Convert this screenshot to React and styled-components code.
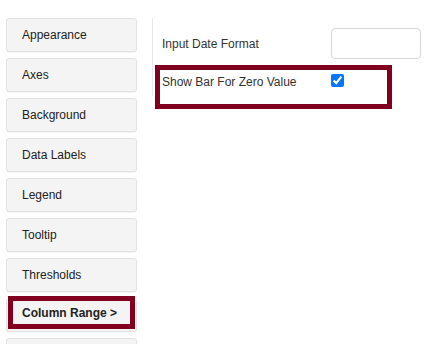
import React from "react";
import styled, { createGlobalStyle } from "styled-components";

const Global = createGlobalStyle`
  body {
    margin: 0;
    background: #ffffff;
    font-family: "Liberation Sans", Arial, sans-serif;
  }
`;

const Page = styled.div`
  display: flex;
  align-items: flex-start;
  width: 432px;
  height: 344px;
  overflow: hidden;
`;

const Sidebar = styled.div`
  display: flex;
  flex-direction: column;
  gap: 6px;
  width: 152px;
  padding: 18px 0 0 6px;
  box-sizing: border-box;
  flex-shrink: 0;
`;

const TabButton = styled.div`
  display: flex;
  align-items: stretch;
  box-sizing: border-box;
  width: 131px;
  height: 34px;
  flex-shrink: 0;
  background: #f4f4f4;
  border: 1px solid #e2e2e2;
  border-radius: 3px;
  box-shadow: 0 1px 1px rgba(0, 0, 0, 0.04);
  color: #222;
  font-size: 12px;
  line-height: 14px;
  cursor: pointer;
`;

const TabLabel = styled.span`
  display: flex;
  align-items: center;
  padding-left: 15px;
`;

const ActiveLabel = styled.span`
  display: flex;
  align-items: center;
  flex: 1;
  margin: -3px 1px 2px 1px;
  padding-left: 9px;
  border: 5px solid #800020;
  font-weight: bold;
`;

const Panel = styled.div`
  width: 270px;
  height: 78px;
  margin-top: 18px;
  border-left: 1px solid #e8e8e8;
  display: flex;
  flex-direction: column;
  gap: 6px;
  padding-top: 10px;
  box-sizing: border-box;
`;

const Row = styled.div`
  display: flex;
  align-items: center;
  flex-shrink: 0;
  padding-left: 9px;
  height: 31px;
`;

const HighlightRow = styled.div`
  display: flex;
  align-items: flex-start;
  flex-shrink: 0;
  box-sizing: border-box;
  width: 237px;
  height: 44px;
  margin-left: 2px;
  padding: 4px 0 0 2px;
  border: 5px solid #800020;
`;

const Label = styled.label`
  width: 169px;
  flex-shrink: 0;
  font-size: 12px;
  line-height: 16px;
  color: #333;
`;

const TextInput = styled.input`
  box-sizing: border-box;
  width: 90px;
  height: 31px;
  margin: 0;
  border: 1px solid #d6d6d6;
  border-radius: 4px;
  background: #fff;
  outline: none;
`;

const Check = styled.input`
  width: 13px;
  height: 13px;
  margin: 0;
`;

const tabs = [
  "Appearance",
  "Axes",
  "Background",
  "Data Labels",
  "Legend",
  "Tooltip",
  "Thresholds",
];

const App = () => {
  return (
    <>
      <Global />
      <Page>
        <Sidebar>
          {tabs.map((t) => (
            <TabButton key={t}>
              <TabLabel>{t}</TabLabel>
            </TabButton>
          ))}
          <TabButton>
            <ActiveLabel>Column Range &gt;</ActiveLabel>
          </TabButton>
          <TabButton />
        </Sidebar>
        <Panel>
          <Row>
            <Label>Input Date Format</Label>
            <TextInput type="text" />
          </Row>
          <HighlightRow>
            <Label>Show Bar For Zero Value</Label>
            <Check type="checkbox" defaultChecked />
          </HighlightRow>
        </Panel>
      </Page>
    </>
  );
};

export default App;
